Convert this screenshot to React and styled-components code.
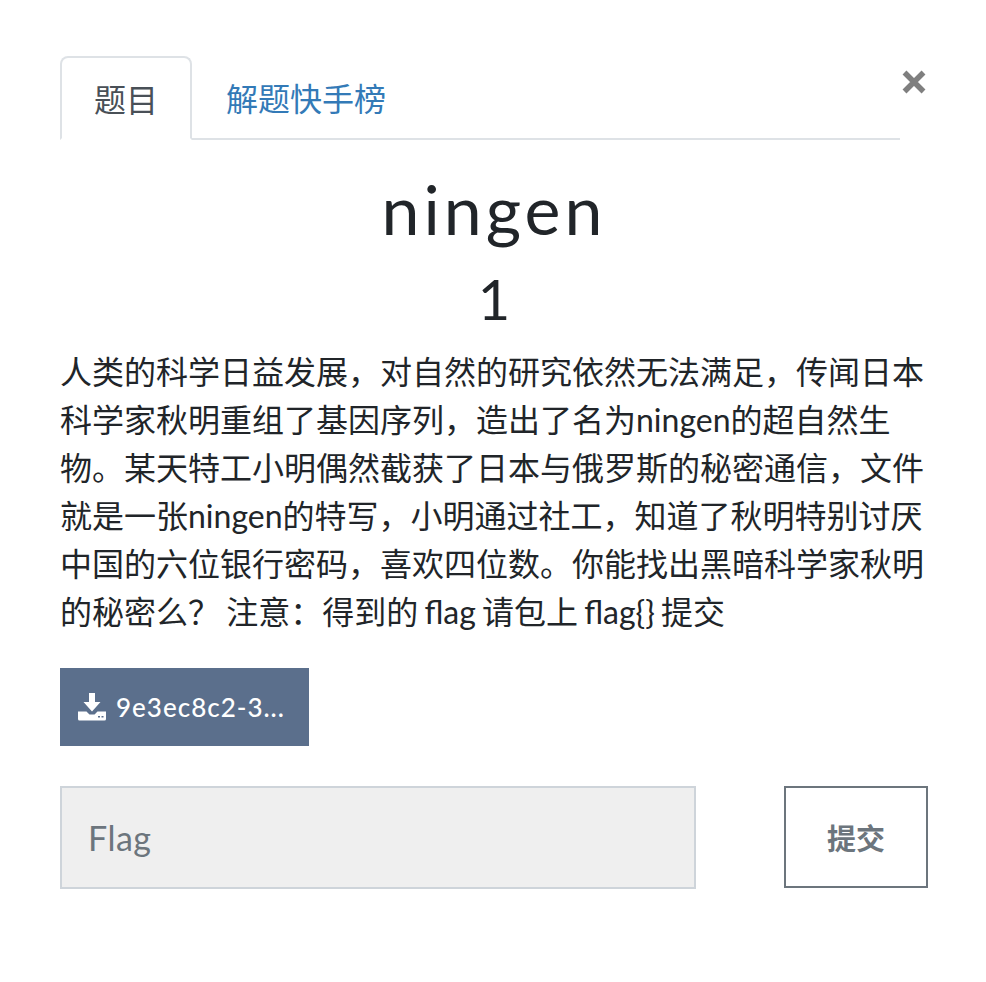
import React from 'react'
import styled, { createGlobalStyle } from 'styled-components'

const Global = createGlobalStyle`
  html, body { margin: 0; background: #fff; }
  * { box-sizing: border-box; }
  body { font-family: Lato, "Noto Sans CJK SC", sans-serif; color: #212529; }
`

export default function App() {
  return (
    <Page>
      <Global />
      <Close aria-label="Close">
        <svg width="26" height="26" viewBox="0 0 26 26">
          <path d="M3.5 3.5 L22.5 22.5 M22.5 3.5 L3.5 22.5" stroke="#7f7f7f" strokeWidth="5.5" />
        </svg>
      </Close>
      <Tabs>
        <Tab active>题目</Tab>
        <Tab>解题快手榜</Tab>
      </Tabs>
      <Title>ningen</Title>
      <Value>1</Value>
      <Description>
        人类的科学日益发展，对自然的研究依然无法满足，传闻日本科学家秋明重组了基因序列，造出了名为ningen的超自然生物。某天特工小明偶然截获了日本与俄罗斯的秘密通信，文件就是一张ningen的特写，小明通过社工，知道了秋明特别讨厌中国的六位银行密码，喜欢四位数。你能找出黑暗科学家秋明的秘密么？ 注意：得到的 flag 请包上 flag{'{}'} 提交
      </Description>
      <Download>
        <svg width="28" height="28" viewBox="0 0 28 28">
          <path d="M11 0h6v9h5.5L14 18.5 5.5 9H11z" fill="#fff" />
          <path fillRule="evenodd" d="M0 18.5h8.5l3 3h5l3-3H28v7.5a1.5 1.5 0 0 1-1.5 1.5h-25A1.5 1.5 0 0 1 0 26z M20 23h2v1.6h-2z M23.5 23h2v1.6h-2z" fill="#fff" />
        </svg>
        <FileName>9e3ec8c2-3...</FileName>
      </Download>
      <SubmitRow>
        <FlagInput placeholder="Flag" />
        <Submit>提交</Submit>
      </SubmitRow>
    </Page>
  )
}

const Page = styled.div`
  position: relative;
  width: 986px;
  height: 982px;
  padding: 56px 58px 0 60px;
`
const Close = styled.div`
  position: absolute;
  top: 69px;
  left: 901px;
  line-height: 0;
`
const Tabs = styled.div`
  display: flex;
  width: 840px;
  height: 84px;
  border-bottom: 2px solid #dee2e6;
`
const Tab = styled.div`
  height: ${p => (p.active ? '84px' : '82px')};
  padding: 0 ${p => (p.active ? '32px' : '34px')};
  display: flex;
  align-items: center;
  font-size: 32px;
  color: ${p => (p.active ? '#495057' : '#337ab7')};
  background: #fff;
  ${p => p.active && `
    border: 2px solid #dee2e6;
    border-bottom-color: #fff;
    border-radius: 8px 8px 0 0;
  `}
`
const Title = styled.h3`
  margin: 28px 0 0;
  text-align: center;
  font-size: 68px;
  font-weight: 400;
  line-height: 82px;
  letter-spacing: 4px;
`
const Value = styled.h4`
  margin: 15px 0 0;
  text-align: center;
  font-size: 56px;
  font-weight: 400;
  line-height: 68px;
`
const Description = styled.p`
  margin: 15px 0 0;
  font-size: 32px;
  line-height: 48px;
  width: 868px;
  word-spacing: -2px;
`
const Download = styled.div`
  display: flex;
  align-items: center;
  gap: 10px;
  margin-top: 32px;
  width: 249px;
  height: 78px;
  padding: 0 18px;
  background: #5b6f8c;
  color: #fff;
`
const FileName = styled.span`
  font-size: 26px;
  font-weight: 500;
  letter-spacing: 1px;
  white-space: nowrap;
`
const SubmitRow = styled.div`
  display: flex;
  justify-content: space-between;
  margin-top: 40px;
  width: 868px;
`
const FlagInput = styled.input`
  width: 636px;
  height: 103px;
  padding: 0 26px;
  background: #efefef;
  border: 2px solid #ced4da;
  font-family: Lato, sans-serif;
  font-size: 34px;
  font-weight: 400;
  letter-spacing: 0.5px;
  &::placeholder { color: #6c757d; opacity: 1; }
`
const Submit = styled.div`
  width: 144px;
  height: 102px;
  border: 2px solid #6c757d;
  display: flex;
  align-items: center;
  justify-content: center;
  color: #6c757d;
  font-size: 29px;
  font-weight: 700;
`
